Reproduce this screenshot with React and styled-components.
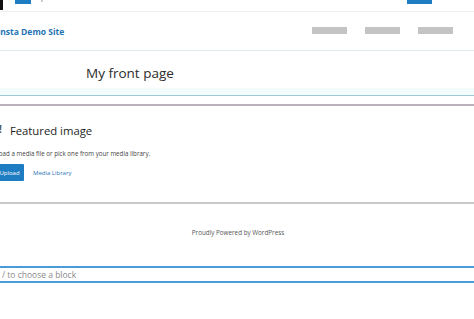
import React from 'react';
import styled, {createGlobalStyle} from 'styled-components';

const Global = createGlobalStyle`
  html, body {
    margin: 0;
    padding: 0;
    background: #fff;
    font-family: "Open Sans", "Noto Sans", sans-serif;
    overflow: hidden;
  }
`

const Page = styled.div`
  width: 474px;
  height: 319px;
  overflow: hidden;
  display: flex;
  flex-direction: column;
`

const TopBar = styled.div`
  height: 11px;
  border-bottom: 1px solid #eef1f4;
  display: flex;
  align-items: flex-start;
  flex-shrink: 0;
`
const Block = styled.div`
  width: ${p => p.w}px;
  height: ${p => p.h}px;
  background: ${p => p.bg};
  margin-left: ${p => p.ml || 0}px;
  border-radius: ${p => p.r || 0}px;
`

const Header = styled.div`
  height: 38px;
  border-bottom: 1px solid #dce9ef;
  display: flex;
  align-items: center;
  justify-content: space-between;
  padding-right: 21px;
  flex-shrink: 0;
`
const SiteTitle = styled.div`
  margin-left: -8px;
  font-size: 8.5px;
  font-weight: 700;
  color: #1f73b4;
`
const Nav = styled.div`
  display: flex;
  gap: 18px;
  margin-top: -1px;
`
const NavItem = styled.div`
  width: 35px;
  height: 7px;
  background: #c4c4c4;
`

const TitleArea = styled.div`
  height: 37px;
  box-sizing: border-box;
  display: flex;
  align-items: center;
  padding: 7px 0 0 86px;
  flex-shrink: 0;
`
const PageTitle = styled.h1`
  margin: 0;
  font-size: 13.5px;
  font-weight: 400;
  color: #2b2b2b;
`
const Band = styled.div`
  height: 7px;
  background: #f3fcfd;
  border-bottom: 1px solid #9fc7d5;
  flex-shrink: 0;
`
const Rule = styled.div`
  margin-top: ${p => p.mt}px;
  height: 2px;
  background: ${p => p.color};
  flex-shrink: 0;
`

const Featured = styled.div`
  padding-top: 17px;
  height: 96px;
  box-sizing: border-box;
  flex-shrink: 0;
`
const FeaturedHead = styled.div`
  display: flex;
  align-items: center;
  gap: 8px;
  font-size: 11.3px;
  color: #1e1e1e;
`
const Bang = styled.span`
  margin-left: -1px;
  font-size: 10px;
  font-weight: 700;
  color: #555;
  margin-top: -4px;
`
const Help = styled.div`
  margin-top: 11px;
  margin-left: -11px;
  font-size: 6.2px;
  color: #444;
`
const Actions = styled.div`
  margin-top: 6px;
  display: flex;
  align-items: center;
  gap: 9px;
`
const UploadBtn = styled.div`
  margin-left: -5px;
  width: 29px;
  height: 17px;
  background: #1e7cc2;
  color: #fff;
  font-size: 6px;
  display: flex;
  align-items: center;
  justify-content: center;
  border-radius: 1px;
`
const LinkText = styled.span`
  font-size: 6px;
  color: #2a74b5;
`

const Footer = styled.div`
  height: 62px;
  box-sizing: border-box;
  padding: 0 0 6px 2px;
  display: flex;
  align-items: center;
  justify-content: center;
  font-size: 6.3px;
  color: #555;
  flex-shrink: 0;
`

const Inserter = styled.div`
  height: 13px;
  border-top: 2px solid #4a9bd8;
  border-bottom: 2px solid #4a9bd8;
  display: flex;
  align-items: center;
  font-size: 8.5px;
  color: #8a8a8a;
  padding-left: 2px;
  flex-shrink: 0;
`

export default function App() {
  return (
    <Page>
      <Global/>
      <TopBar>
        <Block w={3} h={10} bg="#111"/>
        <Block w={16} h={4} bg="#1e7cc2" ml={12}/>
        <Block w={2} h={2} bg="#ccc" ml={10}/>
        <Block w={25} h={4} bg="#1e7cc2" ml={364}/>
      </TopBar>
      <Header>
        <SiteTitle>Kinsta Demo Site</SiteTitle>
        <Nav>
          <NavItem/>
          <NavItem/>
          <NavItem/>
        </Nav>
      </Header>
      <TitleArea>
        <PageTitle>My front page</PageTitle>
      </TitleArea>
      <Band/>
      <Rule mt={8} color="#b9b0b9"/>
      <Featured>
        <FeaturedHead>
          <Bang>!</Bang>
          <span>Featured image</span>
        </FeaturedHead>
        <Help>Upload a media file or pick one from your media library.</Help>
        <Actions>
          <UploadBtn>Upload</UploadBtn>
          <LinkText>Media Library</LinkText>
        </Actions>
      </Featured>
      <Rule mt={0} color="#c9c9c9"/>
      <Footer>Proudly Powered by WordPress</Footer>
      <Inserter>/ to choose a block</Inserter>
    </Page>
  );
}
